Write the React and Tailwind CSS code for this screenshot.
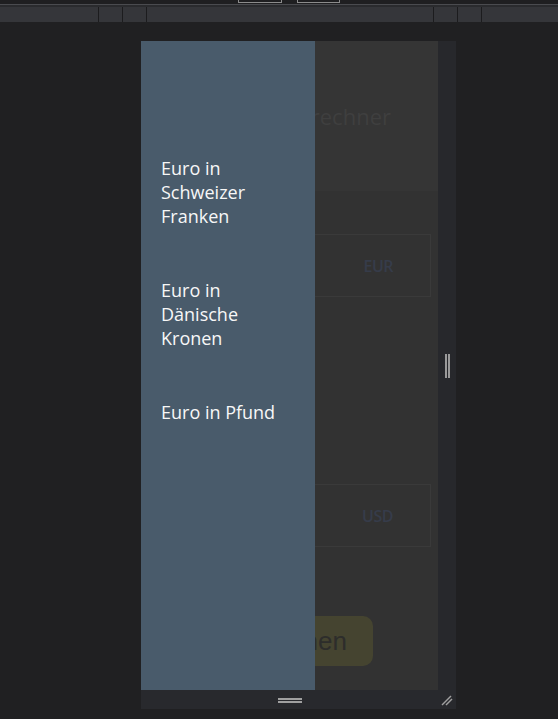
import React from 'react';

const toolbarSeps = [98, 122, 146, 433, 457, 481];

const menuItems = ['Euro in Schweizer Franken', 'Euro in Dänische Kronen', 'Euro in Pfund'];

const CurrencyBox = ({ code }) => (
  <div className="ml-[16px] mr-[7px] h-[63px] border border-[#3a3a3a] flex items-center justify-end pr-[37px]">
    <span className="text-[16px] font-semibold tracking-[-0.5px] text-[#363c4a] [font-family:'Open_Sans',sans-serif]">{code}</span>
  </div>
);

const App = () => {
  return (
    <div className="w-[558px] h-[719px] bg-[#202022] overflow-hidden">
      {/* browser chrome */}
      <div className="relative h-[4px] bg-[#1f1f21]">
        <div className="absolute left-[238px] top-0 w-[44px] h-[3px] border-x border-b border-[#8c8c8c]" />
        <div className="absolute left-[297px] top-0 w-[43px] h-[3px] border-x border-b border-[#8c8c8c]" />
      </div>
      <div className="h-[1px] bg-[#4a4b4f]" />
      <div className="h-[2px] bg-[#2a2b2e]" />
      <div className="relative h-[15px] bg-[#35363a]">
        {toolbarSeps.map((x) => (
          <div key={x} className="absolute top-0 h-full w-[1px] bg-[#1c1c1e]" style={{ left: x }} />
        ))}
      </div>

      {/* device frame */}
      <div className="ml-[141px] mt-[19px] w-[315px] h-[668px] flex flex-col bg-[#28292d]">
        <div className="flex h-[649px]">
          <div className="relative w-[297px] h-full overflow-hidden bg-[#323232]">
            {/* dimmed app content */}
            <div className="h-[150px] bg-[#353535] pt-[60px] pr-[47px] text-right">
              <span className="text-[22px] leading-[30px] text-[#3f3f3f] [font-family:'Open_Sans',sans-serif]">
                Währungsrechner
              </span>
            </div>
            <div className="pt-[43px]">
              <CurrencyBox code="EUR" />
              <div className="h-[187px]" />
              <CurrencyBox code="USD" />
              <div className="flex justify-end mr-[65px] mt-[69px]">
                <div className="h-[50px] rounded-[10px] bg-[#454430] flex items-center pl-[26px] pr-[26px]">
                  <span className="text-[26px] text-[#2d2d2b] [font-family:'Liberation_Sans',Arial,sans-serif]">Berechnen</span>
                </div>
              </div>
            </div>

            {/* side drawer */}
            <div className="absolute left-0 top-0 bottom-0 w-[174px] bg-[#495b6b] pt-[115px] pl-[20px] pr-[21px] flex flex-col gap-[50px]">
              {menuItems.map((item) => (
                <div key={item} className="text-[18px] leading-[24px] text-[#f7f7f7] [font-family:'Open_Sans',sans-serif]">
                  {item}
                </div>
              ))}
            </div>
          </div>
          <div className="w-[18px] h-full bg-[#27282c] flex items-center justify-center">
            <div className="flex gap-[1px] h-[24px]">
              <div className="w-[2px] h-full bg-[#9a9a9a]" />
              <div className="w-[2px] h-full bg-[#9a9a9a]" />
            </div>
          </div>
        </div>
        <div className="flex h-[19px] bg-[#28292d]">
          <div className="w-[297px] flex flex-col items-center justify-center gap-[1px] pt-[2px]">
            <div className="w-[24px] h-[2px] bg-[#a0a0a0]" />
            <div className="w-[24px] h-[2px] bg-[#a0a0a0]" />
          </div>
          <div className="w-[18px] flex items-center justify-center">
            <svg width="12" height="12" viewBox="0 0 12 12">
              <line x1="1" y1="11" x2="10" y2="2" stroke="#a0a0a0" strokeWidth="1.5" />
              <line x1="5" y1="11" x2="11" y2="5" stroke="#a0a0a0" strokeWidth="1.5" />
            </svg>
          </div>
        </div>
      </div>
    </div>
  );
};

export default App;
